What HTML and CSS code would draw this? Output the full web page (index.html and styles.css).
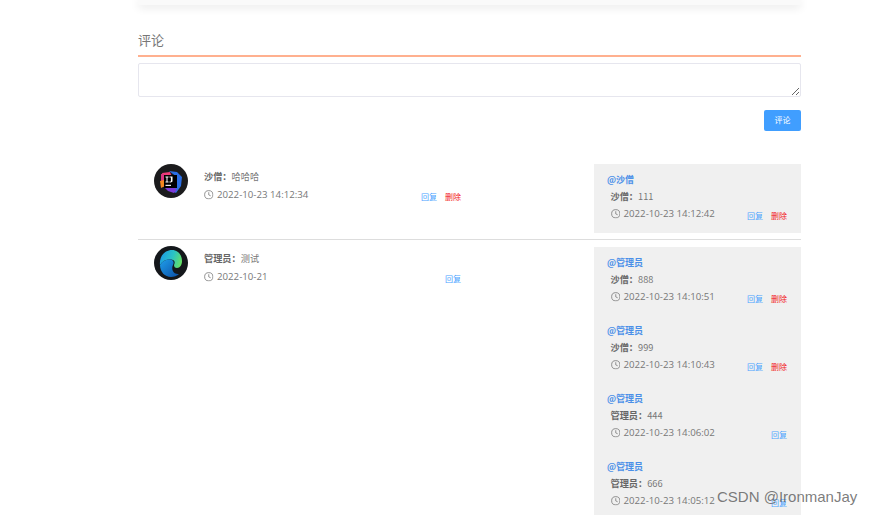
FILE: index.html
```html
<!DOCTYPE html>
<html lang="zh-CN">
<head>
<meta charset="utf-8">
<title>评论</title>
<link rel="stylesheet" href="styles.css">
</head>
<body>
<svg class="defs" width="0" height="0" aria-hidden="true">
  <symbol id="clock" viewBox="0 0 12 12">
    <circle cx="6" cy="6" r="5.200" fill="none" stroke="#777" stroke-width="1"/>
    <path d="M6 2.800v3.400l2.400 1.100" fill="none" stroke="#777" stroke-width="1"/>
  </symbol>
</svg>
<main class="page">
  <div class="top-card"></div>
  <h2 class="title">评论</h2>
  <textarea class="input"></textarea>
  <div class="submit-row"><button class="submit">评论</button></div>

  <section class="comment first">
    <div class="left">
      <svg class="avatar" viewBox="0 0 34 34">
        <circle cx="17" cy="17" r="17" fill="#1b1b1d"/>
        <path d="M8 9l8-1 2 5-8 3z" fill="#f23a78"/>
        <path d="M7 10l3 0 2 12-5 1z" fill="#d9357f"/>
        <path d="M15 7l8 1 5 5-1 9-5 7-5-3 5-3 1-10z" fill="#2b6fe6"/>
        <path d="M6 17l4-1 1 6-4 2z" fill="#f5891e"/>
        <path d="M11 24l9-1 3 3-3 3-6-2z" fill="#7b3ad8"/>
        <rect x="10" y="11" width="13" height="13" fill="#000"/>
        <path d="M11.500 12.500h3v1h-1v4h1v1h-3v-1h1v-4h-1zM15.500 12.500h3v4.600c0 1-1 1.400-2 1.400h-1v-1h1.400v-4h-1.400z" fill="#fff"/>
        <rect x="11.500" y="20.800" width="5.500" height="1.100" fill="#fff"/>
      </svg>
      <div class="body">
        <p class="text"><b>沙僧：</b>哈哈哈</p>
        <p class="date"><svg class="clock"><use href="#clock"/></svg>2022-10-23 14:12:34</p>
      </div>
      <div class="actions"><a class="reply">回复</a><a class="del">删除</a></div>
    </div>
    <div class="panel">
      <article class="item">
        <p class="at">@沙僧</p>
        <p class="text"><b>沙僧：</b>111</p>
        <div class="meta"><p class="date"><svg class="clock"><use href="#clock"/></svg>2022-10-23 14:12:42</p><div class="actions"><a class="reply">回复</a><a class="del">删除</a></div></div>
      </article>
    </div>
  </section>

  <section class="comment second">
    <div class="left">
      <svg class="avatar" viewBox="0 0 34 34">
        <defs>
          <linearGradient id="edgeA" x1="0" y1="0.300" x2="1" y2="0.600"><stop offset="0" stop-color="#1c9be6"/><stop offset=".55" stop-color="#2bc4c4"/><stop offset="1" stop-color="#66e065"/></linearGradient>
          <linearGradient id="edgeB" x1="0" y1="0" x2="1" y2="1"><stop offset="0" stop-color="#1f9fea"/><stop offset="1" stop-color="#0b4fa8"/></linearGradient>
        </defs>
        <circle cx="17" cy="17" r="17" fill="#14171b"/>
        <path d="M6 19C5 10 11 4 18 4c6 0 10 5 10 11 0 4-2 7-5 7-2 0-3-1-3-3 1-2 1-4-1-5-4-2-10 0-13 5z" fill="url(#edgeA)"/>
        <path d="M6 19c3-5 9-7 12-5 2 1 2 3 1 5-2 4 0 9 5 9 1 0 1 0 1 0-2 2-5 3-8 3-6 0-11-5-11-12z" fill="url(#edgeB)"/>
      </svg>
      <div class="body">
        <p class="text"><b>管理员：</b>测试</p>
        <p class="date"><svg class="clock"><use href="#clock"/></svg>2022-10-21</p>
      </div>
      <div class="actions"><a class="reply">回复</a></div>
    </div>
    <div class="panel">
      <article class="item">
        <p class="at">@管理员</p>
        <p class="text"><b>沙僧：</b>888</p>
        <div class="meta"><p class="date"><svg class="clock"><use href="#clock"/></svg>2022-10-23 14:10:51</p><div class="actions"><a class="reply">回复</a><a class="del">删除</a></div></div>
      </article>
      <article class="item">
        <p class="at">@管理员</p>
        <p class="text"><b>沙僧：</b>999</p>
        <div class="meta"><p class="date"><svg class="clock"><use href="#clock"/></svg>2022-10-23 14:10:43</p><div class="actions"><a class="reply">回复</a><a class="del">删除</a></div></div>
      </article>
      <article class="item">
        <p class="at">@管理员</p>
        <p class="text"><b>管理员：</b>444</p>
        <div class="meta"><p class="date"><svg class="clock"><use href="#clock"/></svg>2022-10-23 14:06:02</p><div class="actions"><a class="reply">回复</a></div></div>
      </article>
      <article class="item">
        <p class="at">@管理员</p>
        <p class="text"><b>管理员：</b>666</p>
        <div class="meta"><p class="date"><svg class="clock"><use href="#clock"/></svg>2022-10-23 14:05:12</p><div class="actions"><a class="reply">回复</a></div></div>
      </article>
    </div>
  </section>
</main>
<div class="watermark">CSDN @IronmanJay</div>
</body>
</html>
```
FILE: styles.css
```css
* { box-sizing: border-box; }
html, body { margin: 0; height: 515px; overflow: hidden; background: #fff; }
body { font-family: "Open Sans", "Noto Sans CJK SC", sans-serif; color: #666; position: relative; }
p { margin: 0; }
.defs { position: absolute; }
.page { width: 663px; margin-left: 138px; }
.top-card { height: 5px; background: #fafafa; box-shadow: 0 2px 10px rgba(0,0,0,.12); border-radius: 0 0 3px 3px; }
.title { margin: 0; height: 52px; padding-top: 25px; font-size: 13px; line-height: 20px; font-weight: 400; color: #777; font-family: "Noto Sans CJK SC", sans-serif; border-bottom: 2px solid #ffb08f; }
.input { display: block; width: 100%; height: 34px; margin-top: 6px; border: 1px solid #e6e6ee; border-radius: 2px; background: #fff; resize: vertical; outline: none; }
.submit-row { display: flex; justify-content: flex-end; margin-top: 13px; }
.submit { width: 37px; height: 21px; padding: 0 0 2px; border: 0; border-radius: 2px; background: #409eff; color: #fff; font-size: 8px; font-family: "Noto Sans CJK SC", sans-serif; }
.comment { display: flex; justify-content: space-between; }
.comment.first { margin-top: 33px; padding-bottom: 6px; border-bottom: 1px solid #ddd; }
.comment.second { padding-top: 7px; }
.second .left { margin-top: -1px; }
.left { display: flex; width: 323px; padding-left: 16px; align-items: flex-start; }
.avatar { width: 34px; height: 34px; flex: none; }
.body { flex: 1; margin-left: 16px; padding-top: 5px; }
.text { font-size: 9.200px; line-height: 14px; color: #777; font-family: "Noto Sans CJK SC", sans-serif; }
.text b { font-weight: 700; color: #666; }
.date { display: flex; align-items: center; gap: 3.500px; margin-top: 5px; font-size: 9.700px; line-height: 14px; color: #777; }
.clock { width: 9.500px; height: 9.500px; }
.actions { display: flex; gap: 8px; font-size: 8px; line-height: 12px; font-family: "Noto Sans CJK SC", sans-serif; white-space: nowrap; }
.left > .actions { padding-top: 27px; }
.reply { color: #4ba3ff; }
.del { color: #f21818; }
.panel { width: 207px; background: #f0f0f0; padding: 9px 14px 12px 13px; }
.item + .item { margin-top: 20px; }
.at { font-size: 9px; line-height: 14px; font-weight: 700; color: #4a8fe8; font-family: "Noto Sans CJK SC", sans-serif; }
.item .text { margin: 2px 0 0 3.500px; }
.meta { display: flex; justify-content: space-between; align-items: flex-end; margin: 4px 0 0 3.500px; }
.meta .date { margin-top: 0; }
.meta .actions { margin-bottom: -1px; }
.watermark { position: absolute; left: 717px; top: 487px; font: 15px/20px "Liberation Sans", sans-serif; color: rgba(90,90,90,.8); white-space: nowrap; }
```
